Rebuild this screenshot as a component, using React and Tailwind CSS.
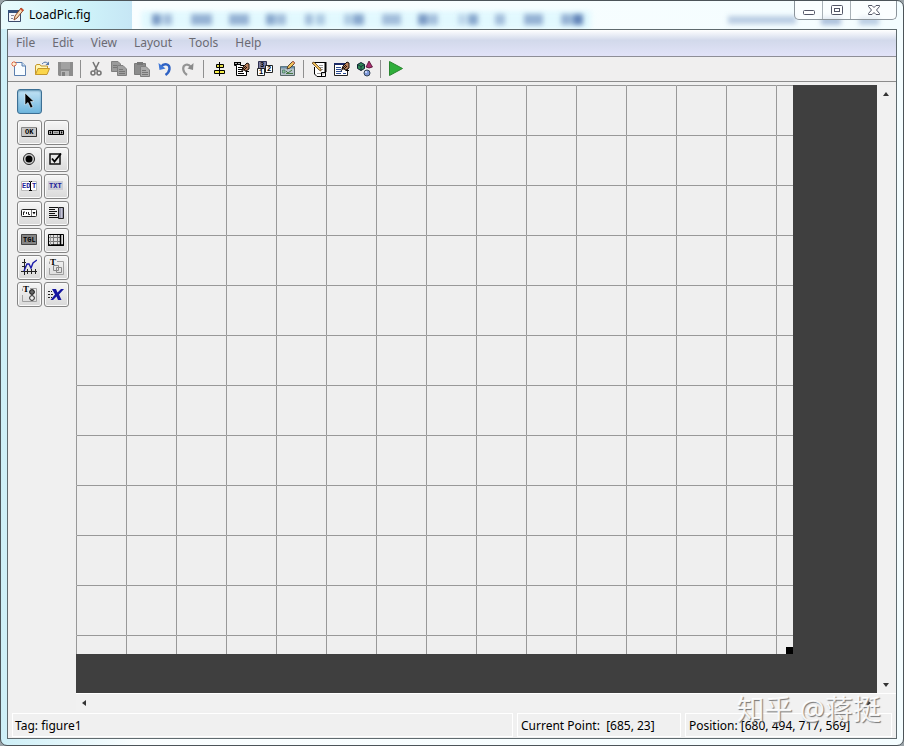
import React, { useState } from "react";

const MENUS = ["File", "Edit", "View", "Layout", "Tools", "Help"];

const FIGURE = { x: 680, y: 494, width: 717, height: 569 };
const GRID_STEP = 50;

// Window showing through the glass title bar: [x, width, opacity]
const GLASS_SHAPES = [
  [151, 9, 0.8], [162, 9, 0.5],
  [190, 21, 0.6],
  [228, 20, 0.6],
  [265, 9, 0.7], [275, 10, 0.5],
  [304, 8, 0.5], [315, 9, 0.4],
  [343, 8, 0.4], [352, 11, 0.7],
  [381, 19, 0.5],
  [417, 10, 0.8], [428, 9, 0.5],
  [457, 8, 0.3], [467, 10, 0.7],
  [494, 10, 0.5],
  [523, 19, 0.6],
  [560, 11, 0.6], [572, 10, 1],
];

const iconText = { fontFamily: '"Liberation Mono", monospace', fontWeight: "bold" };
const serifText = { fontFamily: '"Liberation Serif", serif', fontWeight: "bold" };

/* ---------- Toolbar icons ---------- */

const Pencil = ({ x = 0, y = 0 }) => (
  <g transform={`translate(${x} ${y})`}>
    <path d="M0 8 L1 5 L6 0 L8 2 L3 7 Z" fill="#f3c45c" stroke="#3a2a1a" strokeWidth=".8" />
    <path d="M5 1 L6 0 L8 2 L7 3 Z" fill="#e58a6c" />
  </g>
);

const Hand = ({ x = 0, y = 0 }) => (
  <g transform={`translate(${x} ${y})`}>
    <path d="M1 7 L2 4 L6 0 L8 1 V6 L5 8 L3 7 Z" fill="#b9805c" stroke="#1a0e08" />
    <path d="M0 9 L2 6 L5 3 M3 7 L6 4" fill="none" stroke="#1a0e08" />
    <path d="M5 8 H8 V9 H4 Z" fill="#000" />
  </g>
);

const TOOL_ICONS = {
  new: (
    <>
      <path d="M3.5 1.5 H11 L14.5 5 V14.5 H3.5 Z" fill="#f8fcff" stroke="#5b7fae" />
      <path d="M11 1.5 V5 H14.5" fill="#cfe2f5" stroke="#5b7fae" />
      <path d="M3 0 V6 M0 3 H6 M1 1 L5 5 M5 1 L1 5" stroke="#e2603a" />
      <circle cx="3" cy="3" r="1.5" fill="#fff3d0" />
    </>
  ),
  open: (
    <>
      <path d="M1.5 13.5 V4.5 L3 3.5 H6 L7 5 H13.5 V8" fill="#fff6b4" stroke="#c4962c" />
      <path d="M1.5 13.5 L4 7.5 H15.5 L13 13.5 Z" fill="#fbd64c" stroke="#c4962c" />
      <path d="M8 3 Q11 -.5 14 2.5" fill="none" stroke="#5878a8" />
      <path d="M15 .5 V4 H11.5 Z" fill="#5878a8" />
    </>
  ),
  save: (
    <>
      <path d="M1 1 H16 V15 H2 L1 14 Z" fill="#8d8d8d" />
      <path d="M4 1 H13 V8 H4 Z" fill="#a2a2a2" />
      <path d="M4 10 H12 V15 H4 Z" fill="#b5b5b5" />
      <path d="M5 11 H8 V15 H5 Z" fill="#808080" />
    </>
  ),
  cut: (
    <>
      <path d="M5 1 L9.5 10 M11 1 L6.5 10" stroke="#777" strokeWidth="1.6" fill="none" />
      <circle cx="5" cy="12" r="2" fill="none" stroke="#777" strokeWidth="1.6" />
      <circle cx="11" cy="12" r="2" fill="none" stroke="#777" strokeWidth="1.6" />
    </>
  ),
  copy: (
    <>
      <path d="M.5 .5 H7 L9.5 3 V10.5 H.5 Z" fill="#9a9a9a" stroke="#808080" />
      <path d="M6.500 4.500 H12 L15.500 8 V14.500 H6.500 Z" fill="#a0a0a0" stroke="#808080" />
      <path d="M2 4.500 H6 M2 6.500 H6 M8 8.500 H12 M8 10.500 H14 M8 12.500 H14" stroke="#777" />
    </>
  ),
  paste: (
    <>
      <path d="M.5 2.500 H11.500 V13.500 H.5 Z" fill="#8c8c8c" stroke="#7b7b7b" />
      <path d="M3 1 H9 V4 H3 Z" fill="#777" />
      <path d="M6.500 5.500 H12 L15.500 9 V15.500 H6.500 Z" fill="#ababab" stroke="#808080" />
      <path d="M8 9.500 H12 M8 11.500 H14 M8 13.500 H14" stroke="#777" />
    </>
  ),
  undo: (
    <>
      <path d="M4 6 C7 1.500 13 3 12.500 8 Q12 11.500 8.500 14" fill="none" stroke="#2f62c4" strokeWidth="2.400" />
      <path d="M1.500 2 L2.500 9 L8.500 7.500 Z" fill="#3f77d8" />
    </>
  ),
  redo: (
    <>
      <path d="M11 6 C8 2 3 3.500 3.200 8 Q3.500 11.500 7 14" fill="none" stroke="#949494" strokeWidth="2.200" />
      <path d="M13.500 2 L13 9 L7.500 7.500 Z" fill="#8a8a8a" />
    </>
  ),
  align: (
    <>
      <path d="M5.500 3.500 H12.500 V6.500 H5.500 Z" fill="#e8e04a" stroke="#000" />
      <path d="M3.500 9.500 H13.500 V12.500 H3.500 Z" fill="#f4ec4a" stroke="#000" />
      <path d="M8.500 1 V15" stroke="#000" />
    </>
  ),
  menuEditor: (
    <>
      <path d="M.5 1.500 H6.500 V4.500 H12.500 V14.500 H2.500 V4.500 H.5 Z" fill="#fff" stroke="#000" />
      <path d="M0 1 H7 V4 H0 Z" fill="#000" />
      <path d="M1 2.500 H3 M4 2.500 H6" stroke="#aaa" />
      <path d="M4 6.500 H9 M4 8.500 H8 M4 10.500 H9 M4 12.500 H10" stroke="#000" />
      <Hand x={7} y={2} />
    </>
  ),
  tabOrder: (
    <>
      <path d="M1.500 .5 H9.500 V7.500 H1.500 Z" fill="#8080a4" stroke="#303050" />
      <path d="M8.500 4.500 H15.500 V11.500 H8.500 Z" fill="#fff" stroke="#222" />
      <path d="M.5 7.500 H7.500 V14.500 H.5 Z" fill="#fff" stroke="#222" />
      <text x="3" y="6" fontSize="7" style={iconText}>3</text>
      <text x="10" y="10" fontSize="7" style={iconText}>2</text>
      <text x="2" y="13" fontSize="7" style={iconText}>1</text>
    </>
  ),
  toolbarEditor: (
    <>
      <path d="M.5 5.500 H14.500 V14.500 H.5 Z" fill="#b8c4cc" stroke="#566" />
      <path d="M1 6.500 H14" stroke="#6d8faa" strokeWidth="2" />
      <path d="M2.500 9 H5 V12 H2.500 Z" fill="#8fc49c" stroke="#365" strokeWidth=".6" />
      <path d="M6 10 L8 12 L12 9 M6 12.500 H13" stroke="#447744" fill="none" />
      <Pencil x={7} y={0} />
    </>
  ),
  script: (
    <>
      <path d="M2.500 1.500 H14.500 V15.500 H6 L3.500 13 V6" fill="#fff" stroke="#000" />
      <path d="M14.500 1 V11" stroke="#000" strokeWidth="2" />
      <path d="M8 4.500 H12 M9 6.500 H12 M10 8.500 H12 M6 12.500 H10" stroke="#999" />
      <path d="M1 2 L3 1 L10 8 L10 10 L8 9 Z" fill="#f3c45c" stroke="#5a3a1a" strokeWidth=".8" />
      <path d="M10.500 15 V11.500 H15" fill="#ccc" stroke="#000" />
    </>
  ),
  inspector: (
    <>
      <path d="M.5 2.500 H13.500 V14.500 H.5 Z" fill="#fff" stroke="#222" />
      <path d="M0 2 H14 V4 H0 Z" fill="#1c2a66" />
      <path d="M2 6.500 H7 M2 8.500 H7 M2 10.500 H8 M2 12.500 H7 M9 12.500 H12" stroke="#2a4a90" />
      <Hand x={7} y={1} />
    </>
  ),
  objects: (
    <>
      <path d="M.5 3.500 L4 1.500 L7.500 3.500 V7.500 L4 9.500 L.5 7.500 Z" fill="#2f8c58" stroke="#123" />
      <path d="M.5 3.500 L4 5.500 L7.500 3.500 M4 5.500 V9.500" fill="none" stroke="#123" strokeWidth=".8" />
      <path d="M12 0 L15.500 6 Q12 8 9 6 Z" fill="#a83070" stroke="#402" strokeWidth=".7" />
      <circle cx="10" cy="12" r="3" fill="#7e98d8" stroke="#345" />
      <circle cx="9" cy="11" r="1" fill="#dde6ff" />
    </>
  ),
  run: <path d="M1.500 .5 L14.500 7.500 L1.500 14.500 Z" fill="#2fae3a" stroke="#2a8530" />,
};

const TOOLBAR = [
  [
    { id: "new", label: "New Figure" },
    { id: "open", label: "Open Figure" },
    { id: "save", label: "Save Figure" },
  ],
  [
    { id: "cut", label: "Cut" },
    { id: "copy", label: "Copy" },
    { id: "paste", label: "Paste" },
    { id: "undo", label: "Undo" },
    { id: "redo", label: "Redo" },
  ],
  [
    { id: "align", label: "Align Objects" },
    { id: "menuEditor", label: "Menu Editor" },
    { id: "tabOrder", label: "Tab Order Editor" },
    { id: "toolbarEditor", label: "Toolbar Editor" },
  ],
  [
    { id: "script", label: "Editor" },
    { id: "inspector", label: "Property Inspector" },
    { id: "objects", label: "Object Browser" },
  ],
  [{ id: "run", label: "Run Figure" }],
];

/* ---------- Component palette icons ---------- */

const GroupFrame = () => (
  <>
    <path d="M9 2.500 H15.500 V15.500 H1.500 V9 M1.500 5 V2.500" fill="none" stroke="#a0a0a0" />
    <text x="2" y="6" fontSize="9" style={serifText}>T</text>
  </>
);

const PALETTE = [
  {
    id: "push",
    label: "Push Button",
    icon: (
      <>
        <path d="M.5 3.500 H15.500 V12.500 H.5 Z" fill="#c6c6c6" stroke="#888" />
        <path d="M1 12.500 H15.500 V4" fill="none" stroke="#333" />
        <text x="4" y="10" fontSize="7" style={iconText}>OK</text>
      </>
    ),
  },
  {
    id: "slider",
    label: "Slider",
    icon: (
      <>
        <path d="M.5 6.500 H15.500 V10.500 H.5 Z" fill="#b4b4b4" stroke="#000" />
        <path d="M4.500 6 V11 M11.500 6 V11" stroke="#000" />
        <path d="M3 7 V10 L1.500 8.500 Z M13 7 V10 L14.500 8.500 Z" fill="#000" />
        <path d="M6 8.500 H10" stroke="#777" />
      </>
    ),
  },
  {
    id: "radio",
    label: "Radio Button",
    icon: (
      <>
        <circle cx="8" cy="8" r="5.500" fill="#cfcfcf" stroke="#222" />
        <circle cx="8" cy="8" r="3.500" fill="#000" />
      </>
    ),
  },
  {
    id: "check",
    label: "Check Box",
    icon: (
      <>
        <path d="M2 3 H12 V13 H2 Z" fill="#e6e6e6" stroke="#111" strokeWidth="1.500" />
        <path d="M4 7.500 L6.500 10.500 L13 2.500" fill="none" stroke="#000" strokeWidth="1.800" />
      </>
    ),
  },
  {
    id: "edit",
    label: "Edit Text",
    icon: (
      <>
        <path d="M.5 3.500 H15.500 V12.500 H.5 Z" fill="#fff" stroke="#bbb" />
        <text x="1" y="10" fontSize="7" fill="#1c1c9a" style={iconText}>ED</text>
        <text x="11" y="10" fontSize="7" fill="#1c1c9a" style={iconText}>T</text>
        <path d="M8 3.500 H9 L9.500 4 L10 3.500 H11 M9.500 4 V12 M8 12.500 H11" fill="none" stroke="#000" />
      </>
    ),
  },
  {
    id: "text",
    label: "Static Text",
    icon: (
      <>
        <path d="M0 3 H15 V12 H0 Z" fill="#cdcdd6" />
        <text x="1" y="10" fontSize="7" fill="#1c1c9a" style={iconText}>TXT</text>
      </>
    ),
  },
  {
    id: "popup",
    label: "Pop-up Menu",
    icon: (
      <>
        <rect x=".5" y="4.500" width="15" height="7" rx="1" fill="#fff" stroke="#222" />
        <path d="M10.500 5 V11" stroke="#777" />
        <path d="M2.500 10 V7 H4 M5.500 9 V7 M7.500 7 V9.500 H9" fill="none" stroke="#222" />
        <path d="M11.500 7 H14.500 L13 9.500 Z" fill="#000" />
      </>
    ),
  },
  {
    id: "list",
    label: "Listbox",
    icon: (
      <>
        <path d="M1 2.500 H10 M1 4.500 H7 M1 6.500 H9 M1 8.500 H7 M1 10.500 H9 M1 12.500 H10" stroke="#111" />
        <path d="M10.500 2.500 H15.500 V13.500 H10.500 Z" fill="#9a9ab0" stroke="#222" />
        <path d="M13.500 3 V13" stroke="#c4c4d4" />
      </>
    ),
  },
  {
    id: "toggle",
    label: "Toggle Button",
    icon: (
      <>
        <path d="M.5 2.500 H15.500 V12.500 H.5 Z" fill="#858585" stroke="#444" />
        <text x="2" y="10" fontSize="7" style={iconText}>TGL</text>
      </>
    ),
  },
  {
    id: "table",
    label: "Table",
    icon: (
      <>
        <path d="M.5 2.500 H15.500 V13.500 H.5 Z" fill="#e0e0e0" stroke="#000" />
        <path d="M5.500 3 V13 M9.500 3 V13 M1 5.500 H13 M1 9.500 H13" stroke="#777" />
        <path d="M12.500 2 V14 M0 13 H16" stroke="#000" strokeWidth="1.500" />
        <path d="M2.500 3 V13" stroke="#999" />
      </>
    ),
  },
  {
    id: "axes",
    label: "Axes",
    icon: (
      <>
        <path d="M3.500 0 V16 M0 12.500 H16 M1 3.500 H5 M1 7.500 H5 M6.500 10 V15 M10.500 10 V15 M14.500 10 V15" stroke="#222" />
        <path d="M3 12 L6 5 L8 5 L10 9 L12 4 L16 1" fill="none" stroke="#1a1aaa" strokeWidth="1.400" />
      </>
    ),
  },
  {
    id: "panel",
    label: "Panel",
    icon: (
      <>
        <GroupFrame />
        <path d="M5.500 6.500 H10.500 V11.500 H5.500 Z M8.500 8.500 H13.500 V13.500 H8.500 Z" fill="none" stroke="#888" />
      </>
    ),
  },
  {
    id: "buttonGroup",
    label: "Button Group",
    icon: (
      <>
        <GroupFrame />
        <circle cx="11" cy="6" r="2.400" fill="#666" stroke="#111" />
        <circle cx="11" cy="12" r="2.400" fill="#eee" stroke="#222" />
      </>
    ),
  },
  {
    id: "activex",
    label: "ActiveX Control",
    icon: (
      <>
        <path d="M0 5.500 H4 M0 8.500 H5 M0 11.500 H4" stroke="#222" strokeDasharray="2 1" />
        <path d="M4 3 H8 L9.500 6.500 L13 3 H16 L11 8.500 L13.500 14 H10 L8.500 10.500 L5 14 H2.500 L7 8.500 Z" fill="#1414a0" />
      </>
    ),
  },
];

const Icon = ({ children }) => (
  <svg viewBox="0 0 16 16" className="w-4 h-4 shrink-0" aria-hidden="true">
    {children}
  </svg>
);

/* ---------- Window parts ---------- */

const GlassBackdrop = () => (
  <svg className="absolute inset-0 w-full h-full" aria-hidden="true">
    <defs>
      <filter id="glass" x="-50%" y="-100%" width="200%" height="300%">
        <feGaussianBlur stdDeviation="2.500" />
      </filter>
      <linearGradient id="tint" x1="0" x2="1">
        <stop offset="0" stopColor="#e9fafc" />
        <stop offset=".6" stopColor="#cff4fa" />
        <stop offset="1" stopColor="#c6e6f5" />
      </linearGradient>
    </defs>
    <rect width="131" height="30" fill="url(#tint)" />
    <rect x="140" y="10" width="450" height="18" fill="#d9f7ff" opacity=".7" filter="url(#glass)" />
    <g filter="url(#glass)" fill="#6284b8">
      {GLASS_SHAPES.map(([x, w, o]) => (
        <rect key={x} x={x} y="13" width={w} height="11" opacity={o} />
      ))}
      <rect x="727" y="15" width="68" height="8" opacity=".4" />
      <rect x="820" y="16" width="20" height="8" opacity=".5" />
      <rect x="858" y="16" width="20" height="8" opacity=".4" />
    </g>
  </svg>
);

const TitleBar = () => (
  <header className="relative h-7 shrink-0 flex items-start justify-between pl-[7px] pr-[6px]">
    <GlassBackdrop />
    <div className="relative flex items-center gap-[5px] h-7">
      <Icon>
        <path d="M.5 3.500 H12.500 V14.500 H.5 Z" fill="#f4f6fa" stroke="#3a4a6a" />
        <path d="M0 3 H13 V6 H0 Z" fill="#34507c" />
        <path d="M3 8.500 H6 M3 11.500 H5" stroke="#889" />
        <path d="M6 13 L7 9 L13 1 L15.500 3 L9 11 Z" fill="#f6dcb8" stroke="#8a4a2a" />
        <path d="M12 2 L13 1 L15.500 3 L14.500 4.500 Z" fill="#d8482a" />
      </Icon>
      <h1 className="text-[12px] leading-4 text-black">LoadPic.fig</h1>
    </div>
    <div className="relative flex h-[19px] rounded-b-[5px] border border-t-0 border-[#8b949b] bg-white/60 overflow-hidden">
      <button aria-label="Minimize" className="w-7 flex items-center justify-center border-r border-[#a9b1b7]">
        <svg viewBox="0 0 12 5" className="w-3 h-[5px] mt-1" aria-hidden="true">
          <rect x=".5" y=".5" width="11" height="4" rx="1" fill="#fff" stroke="#535666" />
        </svg>
      </button>
      <button aria-label="Maximize" className="w-7 flex items-center justify-center border-r border-[#a9b1b7]">
        <svg viewBox="0 0 12 10" className="w-3 h-[10px]" aria-hidden="true">
          <rect x=".5" y=".5" width="11" height="9" rx="1" fill="#fff" stroke="#535666" />
          <rect x="3.500" y="3.500" width="5" height="3" fill="#fff" stroke="#535666" />
        </svg>
      </button>
      <button aria-label="Close" className="w-[45px] flex items-center justify-center">
        <svg viewBox="0 0 12 10" className="w-3 h-[10px]" aria-hidden="true">
          <path
            d="M.5 .5 H4 L6 2.500 L8 .5 H11.500 V1.500 L8.500 5 L11.500 8.500 V9.500 H8 L6 7.500 L4 9.500 H.5 V8.500 L3.500 5 L.5 1.500 Z"
            fill="#fff"
            stroke="#535666"
          />
        </svg>
      </button>
    </div>
  </header>
);

const MenuBar = () => (
  <nav className="h-[27px] shrink-0 flex items-center gap-[17px] pl-2 border-b border-[#8e8e96] bg-linear-to-b from-white from-0% via-[#d2d9eb] via-40% to-[#e2e3f8]">
    {MENUS.map((menu) => (
      <button key={menu} className="text-[12px] leading-4 text-[#6b6b73]">
        {menu}
      </button>
    ))}
  </nav>
);

const Toolbar = () => (
  <div role="toolbar" className="h-[25px] shrink-0 flex items-center border-b border-[#8c8c8c] bg-[#f0efef]">
    {TOOLBAR.map((group, i) => (
      <React.Fragment key={i}>
        {i > 0 && (
          <div className="w-2 pl-[3px]">
            <span className="block w-px h-[18px] bg-[#8f8f8f]" />
          </div>
        )}
        {group.map(({ id, label }) => (
          <button key={id} title={label} aria-label={label} className="w-[23px] h-6 flex items-center pl-[3px]">
            <Icon>{TOOL_ICONS[id]}</Icon>
          </button>
        ))}
      </React.Fragment>
    ))}
  </div>
);

const Palette = ({ active, onSelect }) => {
  const base = "w-[25px] h-[25px] flex items-start pl-[3px] pt-[3px] rounded-[3px] border";
  const idle = "border-[#858585] bg-linear-to-b from-[#f6f6f6] to-[#d9d9d9] shadow-[inset_0_0_0_1px_#fafafa]";
  const selected = "border-[#3c6f94] bg-linear-to-b from-[#c3e3f4] to-[#6db6de] shadow-[inset_0_1px_2px_#5d8fae]";

  return (
    <aside className="w-[68px] shrink-0 pl-[9px] pt-1 flex flex-col gap-[6px]">
      <button
        aria-label="Select"
        title="Select"
        onClick={() => onSelect("select")}
        className={`${base} ${active === "select" ? selected : idle}`}
      >
        <Icon>
          <path d="M4 0 V12 L7 9.500 L9.500 15 L12 14 L9.500 8.500 H13 Z" fill="#000" stroke="#e8f4fa" strokeWidth=".6" />
        </Icon>
      </button>
      <div className="grid grid-cols-[25px_25px] gap-[2px]">
        {PALETTE.map(({ id, label, icon }) => (
          <button
            key={id}
            aria-label={label}
            title={label}
            onClick={() => onSelect(id)}
            className={`${base} ${active === id ? selected : idle}`}
          >
            <Icon>{icon}</Icon>
          </button>
        ))}
      </div>
    </aside>
  );
};

const Arrow = ({ d, label }) => (
  <button aria-label={label} className="w-4 h-[17px] flex items-center justify-center">
    <svg viewBox="0 0 8 8" className="w-2 h-2" aria-hidden="true">
      <path d={d} fill="#333" />
    </svg>
  </button>
);

const Canvas = () => (
  <div className="flex-1 min-h-0 min-w-0 bg-[#3f3f3f] overflow-hidden">
    {/* Figure under edit, sized by its own Position property */}
    <svg width={FIGURE.width} height={FIGURE.height} className="block max-w-none" role="img" aria-label="figure1">
      <defs>
        <pattern id="grid" width={GRID_STEP} height={GRID_STEP} patternUnits="userSpaceOnUse">
          <path d={`M${GRID_STEP} .5 H.5 V${GRID_STEP}`} fill="none" stroke="#989898" />
        </pattern>
      </defs>
      <rect width="100%" height="100%" fill="#efefef" />
      <rect width="100%" height="100%" fill="url(#grid)" />
      <rect x={FIGURE.width - 7} y={FIGURE.height - 7} width="7" height="7" fill="#000" />
    </svg>
  </div>
);

const StatusBar = () => (
  <footer className="shrink-0 flex gap-1 px-1 pt-[2px] pb-px text-[12px] leading-4 text-black whitespace-pre">
    <div className="flex-1 min-w-0 h-6 flex items-center border border-white pl-[2px] pt-px">Tag: figure1</div>
    <div className="w-[164px] h-6 flex items-center border border-white pl-[3px] pt-px">Current Point:  [685, 23]</div>
    <div className="w-[207px] h-6 flex items-center border border-white pl-[3px] pt-px">
      {`Position: [${FIGURE.x}, ${FIGURE.y}, ${FIGURE.width}, ${FIGURE.height}]`}
    </div>
  </footer>
);

const App = () => {
  const [tool, setTool] = useState("select");

  return (
    <div className="h-screen bg-[#9aa3a8] font-['Noto_Sans','Noto_Sans_CJK_SC',sans-serif]">
      <div className="relative h-full flex flex-col rounded-[7px] border border-[#4c5459] bg-linear-to-r from-[#cdeff7] from-0% via-[#fafeff] via-15% to-[#f4fdff] overflow-hidden">
        <TitleBar />

        <main className="flex-1 min-h-0 mx-[6px] mb-[6px] flex flex-col border border-[#5f6a6e] bg-[#f0f0f0] overflow-hidden">
          <MenuBar />
          <Toolbar />

          {/* Workspace */}
          <div className="flex-1 min-h-0 pt-[3px] flex">
            <Palette active={tool} onSelect={setTool} />
            <div className="flex-1 min-w-0 flex flex-col">
              <div className="flex-1 min-h-0 flex">
                <Canvas />
                <div className="w-[19px] pl-px flex flex-col items-start justify-between bg-[#f1f1f1]">
                  <Arrow label="Scroll up" d="M4 2 L7 6 H1 Z" />
                  <Arrow label="Scroll down" d="M1 2 H7 L4 6 Z" />
                </div>
              </div>
              <div className="h-[18px] flex items-center justify-between pr-[19px] border-t border-white bg-[#f1f1f1]">
                <Arrow label="Scroll left" d="M2 4 L6 1 V7 Z" />
                <Arrow label="Scroll right" d="M6 4 L2 1 V7 Z" />
              </div>
            </div>
          </div>

          <StatusBar />
        </main>

        <div className="absolute right-[22px] bottom-5 text-[28px] leading-8 text-white/90 [text-shadow:1px_1px_1px_#777] pointer-events-none select-none">
          知乎 @蒋挺
        </div>
      </div>
    </div>
  );
};

export default App;
